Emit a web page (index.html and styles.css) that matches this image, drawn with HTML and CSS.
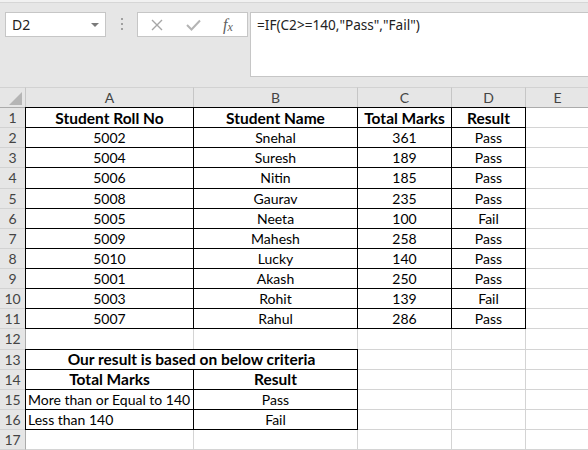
FILE: index.html
```html
<!DOCTYPE html>
<html>
<head>
<meta charset="utf-8">
<link rel="stylesheet" href="styles.css">
</head>
<body>
<div class="top"></div>
<div class="toolbar">
  <div class="namebox"><span class="nbtext">D2</span><span class="arrow"></span></div>
  <div class="dots"><i></i><i></i><i></i></div>
  <div class="buttons">
    <svg class="ico-x" width="12" height="12" viewBox="0 0 12 12"><path d="M1 1 L11 11 M11 1 L1 11" stroke="#a6a6a6" stroke-width="1.4" fill="none"/></svg>
    <svg class="ico-ok" width="15" height="12" viewBox="0 0 15 12"><path d="M1 6 L5.5 10.5 L14 1.5" stroke="#b4b4b4" stroke-width="2" fill="none"/></svg>
    <span class="fx">f<span class="fxx">x</span></span>
  </div>
  <div class="formula">=IF(C2&gt;=140,"Pass","Fail")</div>
</div>
<div class="sheet">
  <div class="h corner"><svg width="13" height="13" viewBox="0 0 13 13"><polygon points="13,0 13,13 0,13" fill="#b5b5b5"/></svg></div>
  <div class="h">A</div><div class="h">B</div><div class="h">C</div><div class="h">D</div><div class="h">E</div>

  <div class="r">1</div><div class="c k klt b">Student Roll No</div><div class="c k kt b">Student Name</div><div class="c k kt b">Total Marks</div><div class="c k kt b">Result</div><div class="c"></div>
  <div class="r">2</div><div class="c k kl">5002</div><div class="c k">Snehal</div><div class="c k">361</div><div class="c k">Pass</div><div class="c"></div>
  <div class="r">3</div><div class="c k kl">5004</div><div class="c k">Suresh</div><div class="c k">189</div><div class="c k">Pass</div><div class="c"></div>
  <div class="r">4</div><div class="c k kl">5006</div><div class="c k">Nitin</div><div class="c k">185</div><div class="c k">Pass</div><div class="c"></div>
  <div class="r">5</div><div class="c k kl">5008</div><div class="c k">Gaurav</div><div class="c k">235</div><div class="c k">Pass</div><div class="c"></div>
  <div class="r">6</div><div class="c k kl">5005</div><div class="c k">Neeta</div><div class="c k">100</div><div class="c k">Fail</div><div class="c"></div>
  <div class="r">7</div><div class="c k kl">5009</div><div class="c k">Mahesh</div><div class="c k">258</div><div class="c k">Pass</div><div class="c"></div>
  <div class="r">8</div><div class="c k kl">5010</div><div class="c k">Lucky</div><div class="c k">140</div><div class="c k">Pass</div><div class="c"></div>
  <div class="r">9</div><div class="c k kl">5001</div><div class="c k">Akash</div><div class="c k">250</div><div class="c k">Pass</div><div class="c"></div>
  <div class="r">10</div><div class="c k kl">5003</div><div class="c k">Rohit</div><div class="c k">139</div><div class="c k">Fail</div><div class="c"></div>
  <div class="r">11</div><div class="c k kl">5007</div><div class="c k">Rahul</div><div class="c k">286</div><div class="c k">Pass</div><div class="c"></div>
  <div class="r">12</div><div class="c"></div><div class="c"></div><div class="c"></div><div class="c"></div><div class="c"></div>
  <div class="r">13</div><div class="c k klt b span2">Our result is based on below criteria</div><div class="c"></div><div class="c"></div><div class="c"></div>
  <div class="r">14</div><div class="c k kl b">Total Marks</div><div class="c k b">Result</div><div class="c"></div><div class="c"></div><div class="c"></div>
  <div class="r">15</div><div class="c k kl l">More than or Equal to 140</div><div class="c k">Pass</div><div class="c"></div><div class="c"></div><div class="c"></div>
  <div class="r">16</div><div class="c k kl l">Less than 140</div><div class="c k">Fail</div><div class="c"></div><div class="c"></div><div class="c"></div>
  <div class="r">17</div><div class="c"></div><div class="c"></div><div class="c"></div><div class="c"></div><div class="c"></div>
</div>
</body>
</html>
```

FILE: styles.css
```css
html, body {
  margin: 0;
  padding: 0;
}
body {
  width: 588px;
  height: 450px;
  overflow: hidden;
  background: #ffffff;
  font-family: Lato, "Liberation Sans", sans-serif;
}
.top {
  height: 3px;
  box-sizing: border-box;
  background: #f1f1f1;
  border-bottom: 1px solid #d6d6d6;
}
.toolbar {
  height: 84px;
  box-sizing: border-box;
  background: #e6e6e6;
  display: flex;
  align-items: flex-start;
  padding: 9px 0 0 5px;
  font-family: "Noto Sans", "Open Sans", sans-serif;
}
.namebox {
  width: 101px;
  height: 25px;
  box-sizing: border-box;
  border: 1px solid #c6c6c6;
  background: #ffffff;
  display: flex;
  align-items: center;
  padding-left: 6px;
  font-size: 14px;
  color: #222;
}
.arrow {
  margin-left: auto;
  margin-right: 6px;
  width: 0;
  height: 0;
  border-left: 4px solid transparent;
  border-right: 4px solid transparent;
  border-top: 4px solid #7a7a7a;
}
.dots {
  width: 2px;
  margin: 6px 14px 0 15px;
  display: flex;
  flex-direction: column;
  gap: 3px;
}
.dots i {
  display: block;
  width: 2px;
  height: 2px;
  background: #a0a0a0;
}
.buttons {
  width: 111px;
  height: 25px;
  box-sizing: border-box;
  border: 1px solid #c6c6c6;
  background: #ffffff;
  display: flex;
  align-items: center;
}
.ico-x {
  margin-left: 13px;
}
.ico-ok {
  margin-left: 23px;
}
.fx {
  margin-left: 22px;
  font-family: "Liberation Serif", serif;
  font-style: italic;
  font-size: 16px;
  color: #606060;
  line-height: 1;
}
.fxx {
  font-size: 12px;
  position: relative;
  top: 1px;
}
.formula {
  margin-left: 2px;
  flex: 1;
  height: 65px;
  box-sizing: border-box;
  border: 1px solid #c6c6c6;
  border-right: none;
  background: #ffffff;
  padding: 2px 0 0 6px;
  line-height: 20px;
  font-size: 13.6px;
  color: #222;
}
.sheet {
  display: grid;
  grid-template-columns: 26px 168px 164px 94px 74px 64px;
  grid-template-rows: 21px repeat(17, 20.125px);
  width: 590px;
}
.sheet > div {
  box-sizing: border-box;
  display: flex;
  align-items: center;
  justify-content: center;
  white-space: nowrap;
  overflow: visible;
}
.h {
  background: #e6e6e6;
  border-top: 1px solid #d2d2d2;
  border-right: 1px solid #c6c6c6;
  border-bottom: 1px solid #ababab;
  color: #444;
  font-size: 14px;
}
.corner {
  justify-content: flex-end !important;
  align-items: flex-end !important;
  padding: 0 3px 2px 0;
}
.corner svg {
  display: block;
}
.r {
  background: #e6e6e6;
  border-right: 1px solid #ababab;
  border-bottom: 1px solid #d2d2d2;
  color: #444;
  font-size: 14px;
}
.c {
  border-right: 1px solid #d4d4d4;
  border-bottom: 1px solid #d4d4d4;
  font-size: 14px;
  color: #000;
}
.c.k {
  border-right-color: #000;
  border-bottom-color: #000;
}
.kl {
  box-shadow: -1px 0 0 #000;
}
.kt {
  box-shadow: 0 -1px 0 #000;
}
.klt {
  box-shadow: -1px 0 0 #000, 0 -1px 0 #000, -1px -1px 0 #000;
}
.c.b {
  font-weight: bold;
  font-size: 15.5px;
}
.l {
  justify-content: flex-start !important;
  padding-left: 2px;
}
.span2 {
  grid-column: span 2;
}
```
